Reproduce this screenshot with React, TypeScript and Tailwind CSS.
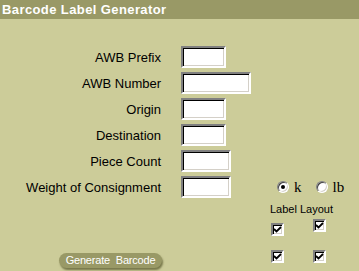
import React from 'react';

const inset =
  'border-2 border-t-[#808080] border-l-[#808080] border-b-white border-r-white shadow-[inset_1px_1px_0_#000,inset_-1px_-1px_0_#d4d0c8] bg-white';

const Field: React.FC<{ label: string; width: string; children?: React.ReactNode }> = ({ label, width, children }) => (
  <div className="flex items-center h-[22px]">
    <div className="w-[161px] text-right text-[13px] leading-none text-black">{label}</div>
    <div className={`ml-[20px] h-[22px] ${width} ${inset}`} />
    {children}
  </div>
);

const Radio: React.FC<{ checked?: boolean; label: string }> = ({ checked, label }) => (
  <div className="flex items-center">
    <span className="relative w-[12px] h-[12px] rounded-full bg-white border border-t-[#808080] border-l-[#808080] border-b-white border-r-white shadow-[inset_1px_1px_0_#404040,inset_-1px_-1px_0_#d4d0c8] flex items-center justify-center">
      {checked && <span className="w-[4px] h-[4px] rounded-full bg-black" />}
    </span>
    <span className="ml-[5px] text-[15px] leading-none text-black font-['Liberation_Serif',serif]">{label}</span>
  </div>
);

const Check: React.FC<{ className?: string }> = ({ className }) => (
  <span className={`w-[13px] h-[13px] flex items-center justify-center ${inset} ${className ?? ''}`}>
    <svg width="9" height="9" viewBox="0 0 9 9">
      <path d="M1 4 L3.5 6.5 L8 2" fill="none" stroke="#000" strokeWidth="1.8" />
    </svg>
  </span>
);

export default function App() {
  return (
    <div className="w-[359px] h-[271px] bg-[#cccc99] font-['Liberation_Sans',Arial,sans-serif] overflow-hidden">
      {/* Title bar */}
      <div className="h-[19px] bg-[#999966] pl-[2px] flex items-center">
        <span className="text-white font-bold text-[13px] tracking-[0.4px] leading-none">Barcode Label Generator</span>
      </div>

      {/* Form */}
      <div className="mt-[27px] flex flex-col gap-[4px]">
        <Field label="AWB Prefix" width="w-[45px]" />
        <Field label="AWB Number" width="w-[70px]" />
        <Field label="Origin" width="w-[45px]" />
        <Field label="Destination" width="w-[45px]" />
        <Field label="Piece Count" width="w-[50px]" />
        <Field label="Weight of Consignment" width="w-[50px]">
          <div className="ml-[46px] flex items-center gap-[14px]">
            <Radio checked label="k" />
            <Radio label="lb" />
          </div>
        </Field>
      </div>

      {/* Bottom */}
      <div className="flex">
        <div className="w-[270px] pl-[59px] pt-[55px]">
          <button className="block h-[15px] w-[103px] rounded-full bg-[#999966] shadow-[1px_2px_2px_#77774a] text-white text-[11px] leading-none tracking-[-0.2px] [word-spacing:3px]">
            Generate Barcode
          </button>
        </div>
        <div className="pt-[5px]">
          <div className="text-[11px] leading-[13px] text-black">Label Layout</div>
          <div className="flex items-start">
            <Check className="ml-[1px] mt-[7px]" />
            <Check className="ml-[29px] mt-[3px]" />
          </div>
          <div className="flex items-start mt-[14px]">
            <Check className="ml-[1px]" />
            <Check className="ml-[29px]" />
          </div>
        </div>
      </div>
    </div>
  );
}
